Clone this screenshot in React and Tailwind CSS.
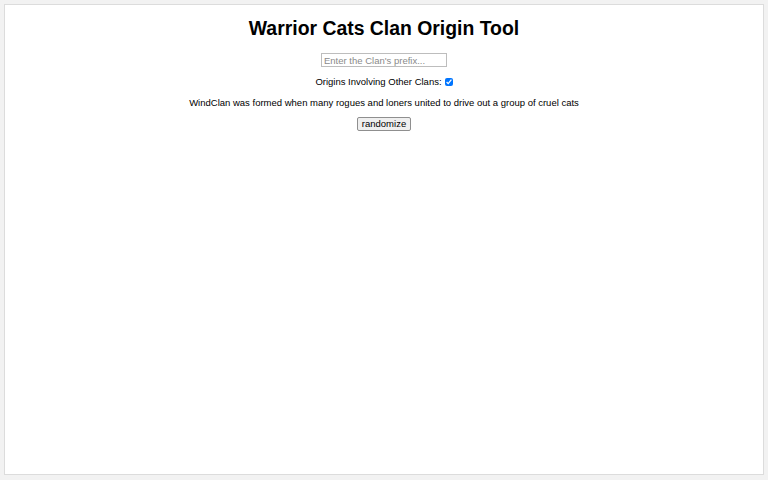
import { useState } from "react";

const App = () => {
  const [prefix, setPrefix] = useState("");
  const [otherClans, setOtherClans] = useState(true);

  return (
    <div className="w-[768px] h-[480px] bg-[#f2f2f2] pt-[4px] pl-[4px] pr-[4px]" style={{ fontFamily: '"Liberation Sans", Arial, sans-serif' }}>
      <div className="h-[471px] bg-white border border-[#dcdcdc] flex flex-col items-center text-black">
        <h1 className="mt-[11px] text-[19.4px] font-bold leading-[24px]">Warrior Cats Clan Origin Tool</h1>
        <input
          type="text"
          value={prefix}
          onChange={(e) => setPrefix(e.target.value)}
          placeholder="Enter the Clan's prefix..."
          className="mt-[13px] w-[126px] h-[14px] border border-[#bdbdbd] px-[2px] text-[9.5px] leading-[12px] placeholder:text-[#8a8a8a] outline-none"
        />
        <label className="mt-[9px] flex items-center text-[9.5px] leading-[12px]">
          Origins Involving Other Clans:
          <input
            type="checkbox"
            checked={otherClans}
            onChange={(e) => setOtherClans(e.target.checked)}
            className="ml-[3px] w-[8px] h-[8px] accent-[#0075ff]"
          />
        </label>
        <p className="mt-[9px] text-[9.5px] leading-[12px]">
          WindClan was formed when many rogues and loners united to drive out a group of cruel cats
        </p>
        <button className="mt-[8px] h-[14px] px-[4px] text-[9.5px] leading-[12px] bg-[#efefef] border border-[#8f8f8f] rounded-[2px]">
          randomize
        </button>
      </div>
    </div>
  );
};

export default App;
